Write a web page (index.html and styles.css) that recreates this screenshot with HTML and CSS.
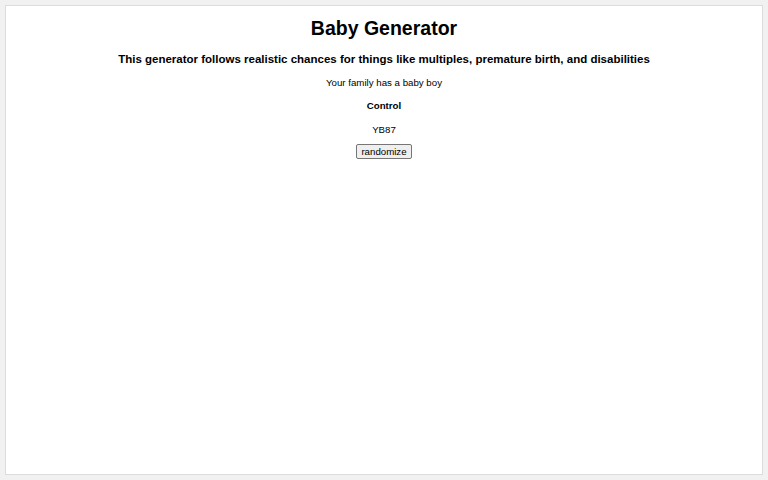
FILE: index.html
```html
<!DOCTYPE html>
<html>
<head>
<meta charset="utf-8">
<title>Baby Generator</title>
<link rel="stylesheet" href="styles.css">
</head>
<body>
<main class="panel">
  <h1 class="title">Baby Generator</h1>
  <h2 class="subtitle">This generator follows realistic chances for things like multiples, premature birth, and disabilities</h2>
  <p class="line first">Your family has a baby boy</p>
  <p class="line bold">Control</p>
  <p class="line gap-lg">YB87</p>
  <button class="btn" type="button">randomize</button>
</main>
</body>
</html>
```

FILE: styles.css
```css
html, body {
  margin: 0;
  height: 100%;
}
body {
  background: #f1f1f1;
  padding: 5px;
  box-sizing: border-box;
  font-family: "Liberation Sans", Arial, sans-serif;
  color: #000;
}
.panel {
  box-sizing: border-box;
  height: 470px;
  background: #fff;
  border: 1px solid #dcdcdc;
  display: flex;
  flex-direction: column;
  align-items: center;
  text-align: center;
  padding-top: 11px;
}
.title {
  margin: 0;
  font-size: 19.5px;
  line-height: 22px;
  font-weight: bold;
}
.subtitle {
  margin: 13px 0 0;
  font-size: 11.5px;
  line-height: 14px;
  font-weight: bold;
}
.line {
  margin: 9px 0 0;
  font-size: 9.7px;
  line-height: 14px;
}
.first {
  margin-top: 10px;
}
.gap-lg {
  margin-top: 10px;
}
.bold {
  font-weight: bold;
}
.btn {
  margin-top: 7px;
  height: 15px;
  font-family: "Liberation Sans", Arial, sans-serif;
  font-size: 9.7px;
  line-height: 11px;
  padding: 0 4px;
  background: #efefef;
  border: 1px solid #767676;
  border-radius: 2px;
  color: #000;
}
```
